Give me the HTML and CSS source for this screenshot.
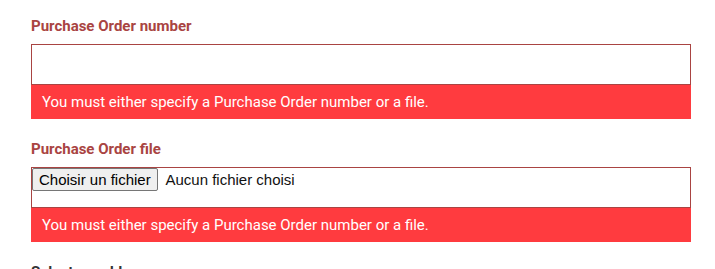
FILE: index.html
```html
<!DOCTYPE html>
<html lang="en">
<head>
  <meta charset="UTF-8" />
  <meta name="viewport" content="width=device-width, initial-scale=1" />
  <title>Purchase Order</title>
  <link rel="stylesheet" href="styles.css">
</head>
<body>
  <form class="po-form">
    <div class="field has-error">
      <label class="field-label" for="poNumber">Purchase Order number</label>
      <input type="text" id="poNumber" name="poNumber" class="text-input" />
      <div class="error-msg">You must either specify a Purchase Order number or a file.</div>
    </div>

    <div class="field has-error">
      <label class="field-label" for="poFile">Purchase Order file</label>
      <label class="file-box">
        <input type="file" id="poFile" name="poFile" class="file-input" />
        <span class="file-button">Choisir un fichier</span>
        <span class="file-name">Aucun fichier choisi</span>
      </label>
      <div class="error-msg">You must either specify a Purchase Order number or a file.</div>
    </div>

    <div class="field">
      <label class="field-label" for="address">Select an address</label>
    </div>
  </form>
</body>
</html>
```

FILE: styles.css
```css
body {
  margin: 0;
  font-family: Roboto, "Liberation Sans", Arial, sans-serif;
  font-size: 15px;
  color: #333;
  background: #fff;
}

.po-form {
  width: 660px;
  padding: 16px 0 0 31px;
}

.field {
  margin-bottom: 20px;
}

.field-label {
  display: block;
  font-weight: 700;
  font-size: 15px;
  line-height: 20px;
  margin-bottom: 8px;
  color: #333;
}

.has-error .field-label {
  color: #a94442;
}

.text-input {
  display: block;
  box-sizing: border-box;
  width: 100%;
  height: 41px;
  margin: 0;
  border: 1px solid #a94442;
  border-radius: 0;
  padding: 6px 10px;
  font: inherit;
  outline: none;
}

/* file picker, looks like chrome's native one */
.file-box {
  display: block;
  box-sizing: border-box;
  height: 41px;
  border: 1px solid #a94442;
  cursor: pointer;
}

.file-input {
  display: none;
}

.file-button {
  display: inline-block;
  font-family: "Liberation Sans", Arial, sans-serif;
  font-size: 15px;
  line-height: 17px;
  padding: 2px 6px;
  color: #000;
  background: #efefef;
  border: 1px solid #767676;
  border-radius: 2px;
  margin-right: 4px;
  vertical-align: top;
}

.file-name {
  font-family: "Liberation Sans", Arial, sans-serif;
  font-size: 15px;
  line-height: 23px;
  color: #111;
  vertical-align: top;
}

.error-msg {
  background: #ff3b3f;
  color: #fff;
  font-size: 15px;
  line-height: 20px;
  padding: 7px 11px;
}
```
